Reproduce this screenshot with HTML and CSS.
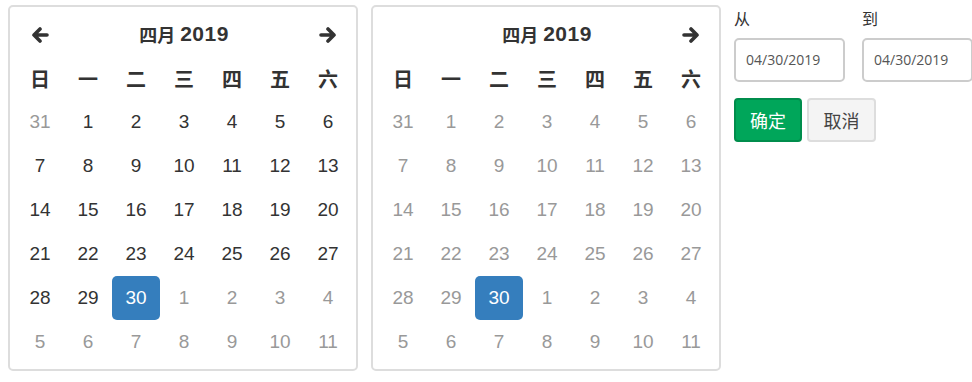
FILE: index.html
```html
<!DOCTYPE html>
<html lang="zh">
<head>
<meta charset="utf-8">
<title>日期范围选择</title>
<link rel="stylesheet" href="styles.css">
</head>
<body>
<div class="picker">
  <div class="cal">
    <div class="grid">
      <div class="nav"><svg width="18" height="16" viewBox="0 0 18 16"><path d="M16 8H3M9 2L3 8l6 6" fill="none" stroke="#333" stroke-width="3.6" stroke-linecap="round" stroke-linejoin="round"/></svg></div>
      <div class="month">四月<span class="yr">2019</span></div>
      <div class="nav"><svg width="18" height="16" viewBox="0 0 18 16"><path d="M2 8h13M9 2l6 6-6 6" fill="none" stroke="#333" stroke-width="3.6" stroke-linecap="round" stroke-linejoin="round"/></svg></div>
      <div class="wd">日</div><div class="wd">一</div><div class="wd">二</div><div class="wd">三</div><div class="wd">四</div><div class="wd">五</div><div class="wd">六</div>
      <div class="d off">31</div><div class="d">1</div><div class="d">2</div><div class="d">3</div><div class="d">4</div><div class="d">5</div><div class="d">6</div>
      <div class="d">7</div><div class="d">8</div><div class="d">9</div><div class="d">10</div><div class="d">11</div><div class="d">12</div><div class="d">13</div>
      <div class="d">14</div><div class="d">15</div><div class="d">16</div><div class="d">17</div><div class="d">18</div><div class="d">19</div><div class="d">20</div>
      <div class="d">21</div><div class="d">22</div><div class="d">23</div><div class="d">24</div><div class="d">25</div><div class="d">26</div><div class="d">27</div>
      <div class="d">28</div><div class="d">29</div><div class="d active">30</div><div class="d off">1</div><div class="d off">2</div><div class="d off">3</div><div class="d off">4</div>
      <div class="d off">5</div><div class="d off">6</div><div class="d off">7</div><div class="d off">8</div><div class="d off">9</div><div class="d off">10</div><div class="d off">11</div>
    </div>
  </div>
  <div class="cal">
    <div class="grid dim">
      <div class="nav"></div>
      <div class="month">四月<span class="yr">2019</span></div>
      <div class="nav"><svg width="18" height="16" viewBox="0 0 18 16"><path d="M2 8h13M9 2l6 6-6 6" fill="none" stroke="#333" stroke-width="3.6" stroke-linecap="round" stroke-linejoin="round"/></svg></div>
      <div class="wd">日</div><div class="wd">一</div><div class="wd">二</div><div class="wd">三</div><div class="wd">四</div><div class="wd">五</div><div class="wd">六</div>
      <div class="d">31</div><div class="d">1</div><div class="d">2</div><div class="d">3</div><div class="d">4</div><div class="d">5</div><div class="d">6</div>
      <div class="d">7</div><div class="d">8</div><div class="d">9</div><div class="d">10</div><div class="d">11</div><div class="d">12</div><div class="d">13</div>
      <div class="d">14</div><div class="d">15</div><div class="d">16</div><div class="d">17</div><div class="d">18</div><div class="d">19</div><div class="d">20</div>
      <div class="d">21</div><div class="d">22</div><div class="d">23</div><div class="d">24</div><div class="d">25</div><div class="d">26</div><div class="d">27</div>
      <div class="d">28</div><div class="d">29</div><div class="d active">30</div><div class="d">1</div><div class="d">2</div><div class="d">3</div><div class="d">4</div>
      <div class="d">5</div><div class="d">6</div><div class="d">7</div><div class="d">8</div><div class="d">9</div><div class="d">10</div><div class="d">11</div>
    </div>
  </div>
  <div class="ranges">
    <div class="inputs">
      <div class="field">
        <label class="lbl">从</label>
        <div class="input">04/30/2019</div>
      </div>
      <div class="field">
        <label class="lbl">到</label>
        <div class="input">04/30/2019</div>
      </div>
    </div>
    <div class="buttons">
      <button class="btn ok">确定</button>
      <button class="btn cancel">取消</button>
    </div>
  </div>
</div>
</body>
</html>
```

FILE: styles.css
```css
html, body {
  margin: 0;
  padding: 0;
  background: #fff;
}
body {
  font-family: "Liberation Sans", "Noto Sans CJK SC", Arial, sans-serif;
  color: #333;
  overflow: hidden;
}
.picker {
  display: flex;
  align-items: flex-start;
  gap: 13px;
  padding: 5px 0 0 8px;
}
.cal {
  width: 346px;
  height: 362px;
  border: 2px solid #ddd;
  border-radius: 5px;
  flex: none;
}
.grid {
  display: grid;
  grid-template-columns: repeat(7, 48px);
  grid-auto-rows: 44px;
  margin: 5px 4px 5px 6px;
}
.grid > div {
  display: flex;
  align-items: center;
  justify-content: center;
}
.month {
  grid-column: span 5;
  font-family: "Noto Sans CJK SC", sans-serif;
  font-size: 18px;
  font-weight: bold;
}
.yr {
  font-family: "Liberation Sans", Arial, sans-serif;
  font-size: 21px;
  margin-left: 5px;
  letter-spacing: 0.5px;
}
.wd {
  font-family: "Noto Sans CJK SC", sans-serif;
  font-size: 20px;
  font-weight: bold;
}
.nav svg {
  display: block;
  margin-top: 2px;
}
.d {
  font-size: 19px;
  color: #333;
  border-radius: 5px;
}
.d.off, .dim .d {
  color: #999;
}
.d.active, .dim .d.active {
  background: #357ebd;
  color: #fff;
}
.ranges {
  display: flex;
  flex-direction: column;
  flex: none;
}
.inputs {
  display: flex;
  gap: 17px;
}
.field {
  display: flex;
  flex-direction: column;
}
.lbl {
  font-family: "Noto Sans CJK SC", sans-serif;
  font-size: 16px;
  line-height: 26px;
  color: #333;
  height: 33px;
}
.input {
  box-sizing: border-box;
  width: 111px;
  height: 44px;
  border: 2px solid #ccc;
  border-radius: 5px;
  padding: 0 0 0 10px;
  font-family: "Open Sans", "Noto Sans", sans-serif;
  font-size: 14px;
  line-height: 40px;
  color: #555;
  white-space: nowrap;
  overflow: hidden;
}
.buttons {
  display: flex;
  gap: 5px;
  margin-top: 16px;
}
.btn {
  box-sizing: border-box;
  height: 44px;
  border-radius: 4px;
  font-family: "Noto Sans CJK SC", sans-serif;
  font-size: 18px;
  padding: 0;
}
.ok {
  width: 68px;
  background: #00a65a;
  border: 2px solid #008d4c;
  color: #fff;
}
.cancel {
  width: 69px;
  background: #f4f4f4;
  border: 2px solid #ddd;
  color: #444;
}
```
